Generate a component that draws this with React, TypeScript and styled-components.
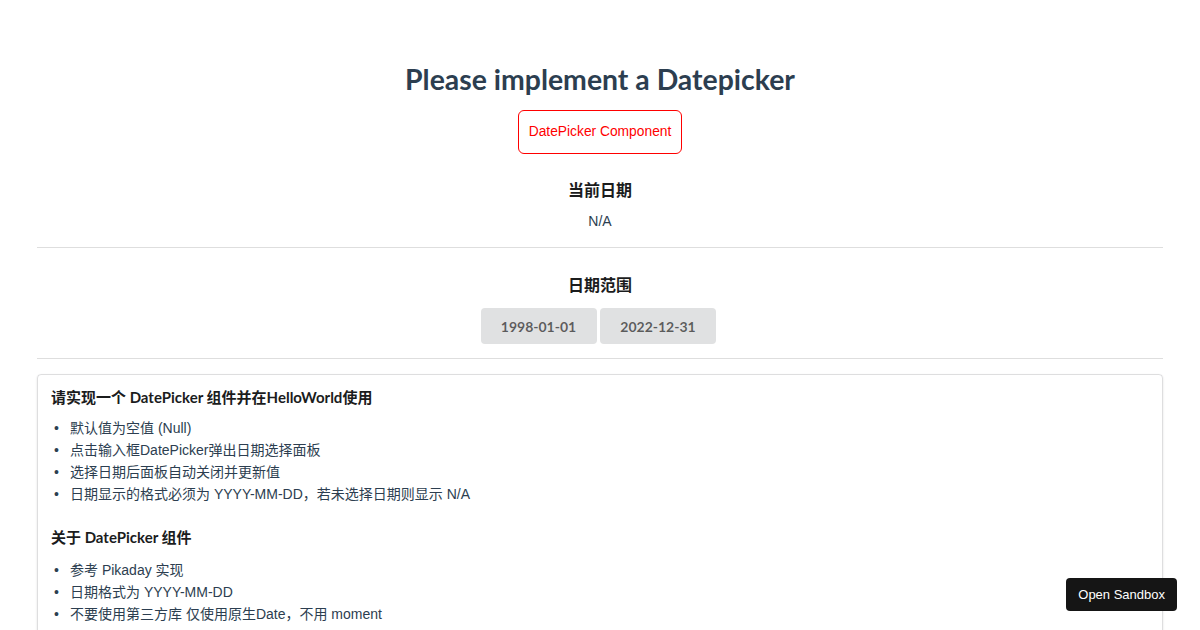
import React, { ReactElement } from "react";
import styled, { createGlobalStyle } from "styled-components";

const GlobalStyle = createGlobalStyle`
  body {
    margin: 0;
    background: #fff;
    font-family: "Liberation Sans", Arial, "Noto Sans CJK SC", sans-serif;
    font-size: 14px;
    color: #2c3e50;
  }
`;

const rules = [
  "默认值为空值 (Null)",
  "点击输入框DatePicker弹出日期选择面板",
  "选择日期后面板自动关闭并更新值",
  "日期显示的格式必须为 YYYY-MM-DD，若未选择日期则显示 N/A",
];

const notes = [
  "参考 Pikaday 实现",
  "日期格式为 YYYY-MM-DD",
  "不要使用第三方库 仅使用原生Date，不用 moment",
];

export default function App(): ReactElement {
  return (
    <>
      <GlobalStyle />
      <Page>
        <Title>Please implement a Datepicker</Title>
        <PickerBox>DatePicker Component</PickerBox>
        <SubTitle>当前日期</SubTitle>
        <Value>N/A</Value>
        <Divider />
        <SubTitle $top={26}>日期范围</SubTitle>
        <Buttons>
          <RangeButton>1998-01-01</RangeButton>
          <RangeButton>2022-12-31</RangeButton>
        </Buttons>
        <Divider />
        <Segment>
          <SegmentTitle>请实现一个 DatePicker 组件并在HelloWorld使用</SegmentTitle>
          <List>
            {rules.map((r) => (
              <Item key={r}>{r}</Item>
            ))}
          </List>
          <SegmentTitle $top={22}>关于 DatePicker 组件</SegmentTitle>
          <List $top={12}>
            {notes.map((n) => (
              <Item key={n}>{n}</Item>
            ))}
          </List>
        </Segment>
      </Page>
      <SandboxButton>Open Sandbox</SandboxButton>
    </>
  );
}

const Page = styled.div`
  display: flex;
  flex-direction: column;
  align-items: center;
  padding: 61px 37px 40px;
`;

const Title = styled.h1`
  margin: 0;
  font-family: Lato, "Noto Sans CJK SC", sans-serif;
  font-weight: 700;
  font-size: 28.4px;
  line-height: 36px;
  color: #2c3e50;
`;

const PickerBox = styled.div`
  margin-top: 13px;
  padding: 13px 0;
  width: 162px;
  text-align: center;
  border: 1px solid #ff0000;
  border-radius: 6px;
  color: #ff0000;
  font-size: 13.8px;
  line-height: 16px;
`;

const SubTitle = styled.h3<{ $top?: number }>`
  margin: ${(p) => p.$top ?? 25}px 0 0;
  font-family: Lato, "Noto Sans CJK SC", sans-serif;
  font-weight: 700;
  font-size: 16px;
  line-height: 22px;
  color: #1b1c1d;
`;

const Value = styled.div`
  margin-top: 10px;
  line-height: 20px;
  font-size: 14px;
`;

const Divider = styled.hr`
  align-self: stretch;
  margin: 16px 0 0;
  border: 0;
  border-top: 1px solid #dedede;
`;

const Buttons = styled.div`
  display: flex;
  margin-top: 12px;
  margin-bottom: -2px;
`;

const RangeButton = styled.button`
  width: 116px;
  height: 36px;
  margin-right: 3.5px;
  border: 0;
  border-radius: 4px;
  background: #e0e1e2;
  color: rgba(0, 0, 0, 0.6);
  font-family: Lato, sans-serif;
  font-weight: 700;
  font-size: 14px;
  cursor: pointer;
`;

const Segment = styled.div`
  align-self: stretch;
  margin-top: 15px;
  padding: 12px 13px 30px;
  border: 1px solid rgba(34, 36, 38, 0.15);
  border-radius: 4px;
  box-shadow: 0 1px 2px 0 rgba(34, 36, 38, 0.15);
`;

const SegmentTitle = styled.h4<{ $top?: number }>`
  margin: ${(p) => p.$top ?? 0}px 0 0;
  font-family: Lato, "Noto Sans CJK SC", sans-serif;
  font-weight: 700;
  font-size: 15px;
  line-height: 20px;
  color: #1b1c1d;
`;

const List = styled.ul<{ $top?: number }>`
  margin: ${(p) => p.$top ?? 10}px 0 0;
  padding: 0;
  list-style: none;
`;

const Item = styled.li`
  display: flex;
  line-height: 22px;
  font-size: 14px;
  color: #2c3e50;

  &::before {
    content: "•";
    width: 19px;
    padding-left: 3px;
    box-sizing: border-box;
    flex: none;
  }
`;

const SandboxButton = styled.button`
  position: fixed;
  right: 23px;
  bottom: 19px;
  height: 33px;
  padding: 0 12px;
  border: 0;
  border-radius: 4px;
  background: #151515;
  color: #fff;
  font-family: "Liberation Sans", Arial, sans-serif;
  font-size: 13px;
  cursor: pointer;
`;
